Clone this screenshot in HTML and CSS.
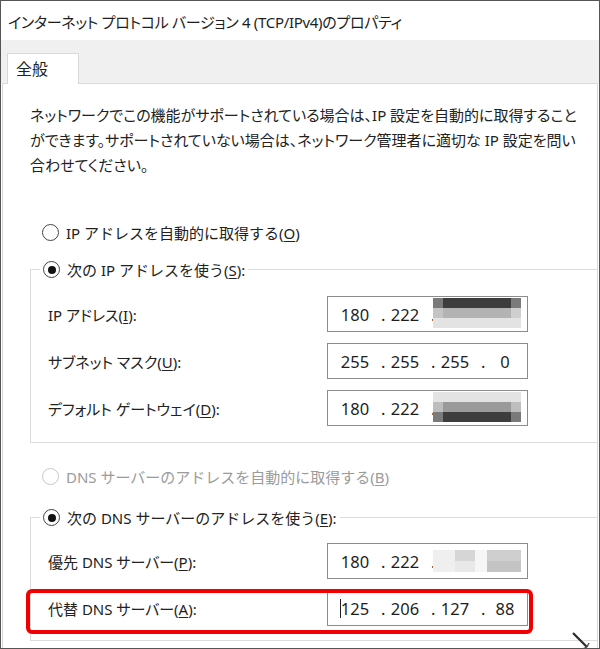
FILE: index.html
```html
<!DOCTYPE html>
<html lang="ja">
<head>
<meta charset="utf-8">
<title>インターネット プロトコル バージョン 4 (TCP/IPv4)のプロパティ</title>
<link rel="stylesheet" href="styles.css">
</head>
<body>
<div class="window">
  <div class="titlebar">インターネット プロトコル バージョン 4 (TCP/IPv4)のプロパティ</div>
  <div class="tabstrip"><div class="tab">全般</div></div>
  <div class="panel">
    <p class="desc">ネットワークでこの機能がサポートされている場合は、IP 設定を自動的に取得すること<br>ができます。サポートされていない場合は、ネットワーク管理者に適切な IP 設定を問い<br>合わせてください。</p>

    <div class="radio-row"><span class="radio"></span><span>IP アドレスを自動的に取得する(<u>O</u>)</span></div>

    <fieldset class="group group-ip">
      <legend><span class="radio checked"></span><span>次の IP アドレスを使う(<u>S</u>):</span></legend>
      <div class="field-row">
        <span class="label">IP アドレス(<u>I</u>):</span>
        <div class="ipbox">
          <span class="oct">180</span><span class="dot">.</span><span class="oct">222</span><span class="dot">.</span><span class="oct"></span><span class="dot"></span><span class="oct"></span>
          <span class="mask mask-a"><i class="b1"></i><i class="b2"></i><i class="b3"></i></span>
        </div>
      </div>
      <div class="field-row">
        <span class="label">サブネット マスク(<u>U</u>):</span>
        <div class="ipbox">
          <span class="oct">255</span><span class="dot">.</span><span class="oct">255</span><span class="dot">.</span><span class="oct">255</span><span class="dot">.</span><span class="oct">0</span>
        </div>
      </div>
      <div class="field-row">
        <span class="label">デフォルト ゲートウェイ(<u>D</u>):</span>
        <div class="ipbox">
          <span class="oct">180</span><span class="dot">.</span><span class="oct">222</span><span class="dot">.</span><span class="oct"></span><span class="dot"></span><span class="oct"></span>
          <span class="mask mask-b"><i class="b3"></i><i class="b2"></i><i class="b1"></i></span>
        </div>
      </div>
    </fieldset>

    <div class="radio-row disabled"><span class="radio"></span><span>DNS サーバーのアドレスを自動的に取得する(<u>B</u>)</span></div>

    <fieldset class="group group-dns">
      <legend><span class="radio checked"></span><span>次の DNS サーバーのアドレスを使う(<u>E</u>):</span></legend>
      <div class="field-row">
        <span class="label">優先 DNS サーバー(<u>P</u>):</span>
        <div class="ipbox">
          <span class="oct">180</span><span class="dot">.</span><span class="oct">222</span><span class="dot">.</span><span class="oct"></span><span class="dot"></span><span class="oct"></span>
          <span class="pixels"><i class="p1"></i><i class="p2"></i><i class="p3"></i><i class="p4"></i><i class="p5"></i><i class="p6"></i></span>
        </div>
      </div>
      <div class="field-row">
        <span class="label">代替 DNS サーバー(<u>A</u>):</span>
        <div class="ipbox">
          <span class="caret"></span>
          <span class="oct">125</span><span class="dot">.</span><span class="oct">206</span><span class="dot">.</span><span class="oct">127</span><span class="dot">.</span><span class="oct">88</span>
        </div>
      </div>
    </fieldset>
  </div>

  <div class="highlight"></div>
  <svg class="pointer" width="20" height="20" viewBox="0 0 20 20"><path d="M1 1 L15 15" stroke="#2a2a2a" stroke-width="2.2" fill="none"/><path d="M15 15 L11 17 M15 15 L17 11" stroke="#555" stroke-width="1.5" fill="none"/></svg>
</div>
</body>
</html>
```

FILE: styles.css
```css
* { box-sizing: border-box; }
html, body { margin: 0; padding: 0; background: #fff; }
body {
  font-family: "Noto Sans", "Noto Sans CJK JP", sans-serif;
  color: #222;
  font-size: 15px;
}
.window {
  position: relative;
  width: 600px;
  height: 649px;
  border: 1px solid #555;
  display: flex;
  flex-direction: column;
  overflow: hidden;
  background: #fff;
}
.titlebar {
  height: 39px;
  padding: 9px 7px 0;
  line-height: 24px;
  font-size: 15px;
  color: #1e1e1e;
  white-space: nowrap;
  font-feature-settings: "palt";
  letter-spacing: -0.3px;
}
.tabstrip {
  height: 43px;
  background: #f0f0f0;
  padding: 13px 0 0 6px;
  display: flex;
  align-items: flex-end;
}
.tab {
  position: relative;
  z-index: 1;
  width: 72px;
  height: 31px;
  margin-bottom: -1px;
  background: #fff;
  border: 1px solid #d9d9d9;
  border-bottom: none;
  padding: 3px 0 0 8px;
  font-size: 16px;
  line-height: 24px;
}
.panel {
  flex: 1;
  margin: 0 1px;
  border: 1px solid #d9d9d9;
  border-bottom: none;
  overflow: hidden;
}
.desc {
  margin: 19px 0 0 27px;
  line-height: 25px;
  white-space: nowrap;
  font-feature-settings: "palt";
}
.radio-row {
  display: flex;
  align-items: center;
  height: 25px;
  padding-left: 39px;
  margin-top: 42px;
  white-space: nowrap;
}
.radio-row.disabled { color: #9b9b9b; margin-top: 21px; }
.radio {
  display: inline-block;
  flex: none;
  width: 17px;
  height: 17px;
  border: 1px solid #444;
  border-radius: 50%;
  margin-right: 7px;
  position: relative;
  background: #fff;
}
.disabled .radio { border-color: #c6c6c6; }
.radio.checked::after {
  content: "";
  position: absolute;
  left: 3.5px;
  top: 3.5px;
  width: 8px;
  height: 8px;
  border-radius: 50%;
  background: #111;
}
.group {
  margin: 12px -20px 0 27px;
  border: 1px solid #dcdcdc;
  padding: 14px 0 16px 17px;
  min-width: 0;
}
.group-dns { margin-top: 16px; padding-top: 13px; padding-bottom: 14px; }
.group legend {
  display: flex;
  align-items: center;
  height: 25px;
  margin-left: -8px;
  padding: 0 3px 0 2px;
  white-space: nowrap;
}
.group legend .radio { margin-left: 1px; }
.field-row {
  display: flex;
  align-items: center;
  height: 36px;
}
.field-row + .field-row { margin-top: 11px; }
.label {
  width: 279px;
  flex: none;
  white-space: nowrap;
  font-feature-settings: "palt";
}
.ipbox {
  position: relative;
  width: 201px;
  height: 36px;
  border: 1px solid #8c8c8c;
  padding-left: 12px;
  display: flex;
  align-items: center;
  font-size: 16.5px;
  color: #1e1e1e;
}
.oct {
  width: 30px;
  text-align: center;
  flex: none;
}
.dot {
  width: 20px;
  padding-left: 11px;
  flex: none;
}
.caret {
  position: absolute;
  left: 12px;
  top: 8px;
  width: 1px;
  height: 19px;
  background: #222;
}
.mask {
  position: absolute;
  left: 105px;
  top: 1px;
  width: 88px;
  height: 31px;
  display: flex;
  flex-direction: column;
}
.mask i { display: block; height: 10px; flex: none; }
.mask .b1 { background: linear-gradient(to right, #7a7a7a 0 10px, #3d3d3d 10px 78px, #7a7a7a 78px); }
.mask .b2 { background: linear-gradient(to right, #c4c4c4 0 10px, #b3b3b3 10px 78px, #cfcfcf 78px); }
.mask .b3 { background: #e3e3e3; }
.mask-b .b2 { background: linear-gradient(to right, #bdbdbd 0 10px, #9a9a9a 10px 78px, #bdbdbd 78px); }
.pixels {
  position: absolute;
  left: 105px;
  top: 6px;
  width: 88px;
  height: 22px;
}
.pixels i { position: absolute; display: block; }
.pixels .p1 { left: 0; top: 0; width: 22px; height: 22px; background: #efefef; }
.pixels .p2 { left: 22px; top: 0; width: 20px; height: 11px; background: #d6d6d6; }
.pixels .p3 { left: 22px; top: 11px; width: 20px; height: 11px; background: #e8e8e8; }
.pixels .p4 { left: 42px; top: 0; width: 12px; height: 22px; background: #f6f6f6; }
.pixels .p5 { left: 54px; top: 0; width: 34px; height: 11px; background: #cfcfcf; }
.pixels .p6 { left: 54px; top: 11px; width: 34px; height: 11px; background: #c4c4c4; }
.highlight {
  position: absolute;
  left: 25px;
  top: 588px;
  width: 507px;
  height: 45px;
  border: 4px solid #f00000;
  border-radius: 6px;
}
.pointer {
  position: absolute;
  left: 571px;
  top: 631px;
}
u { text-underline-offset: 2px; }
```
